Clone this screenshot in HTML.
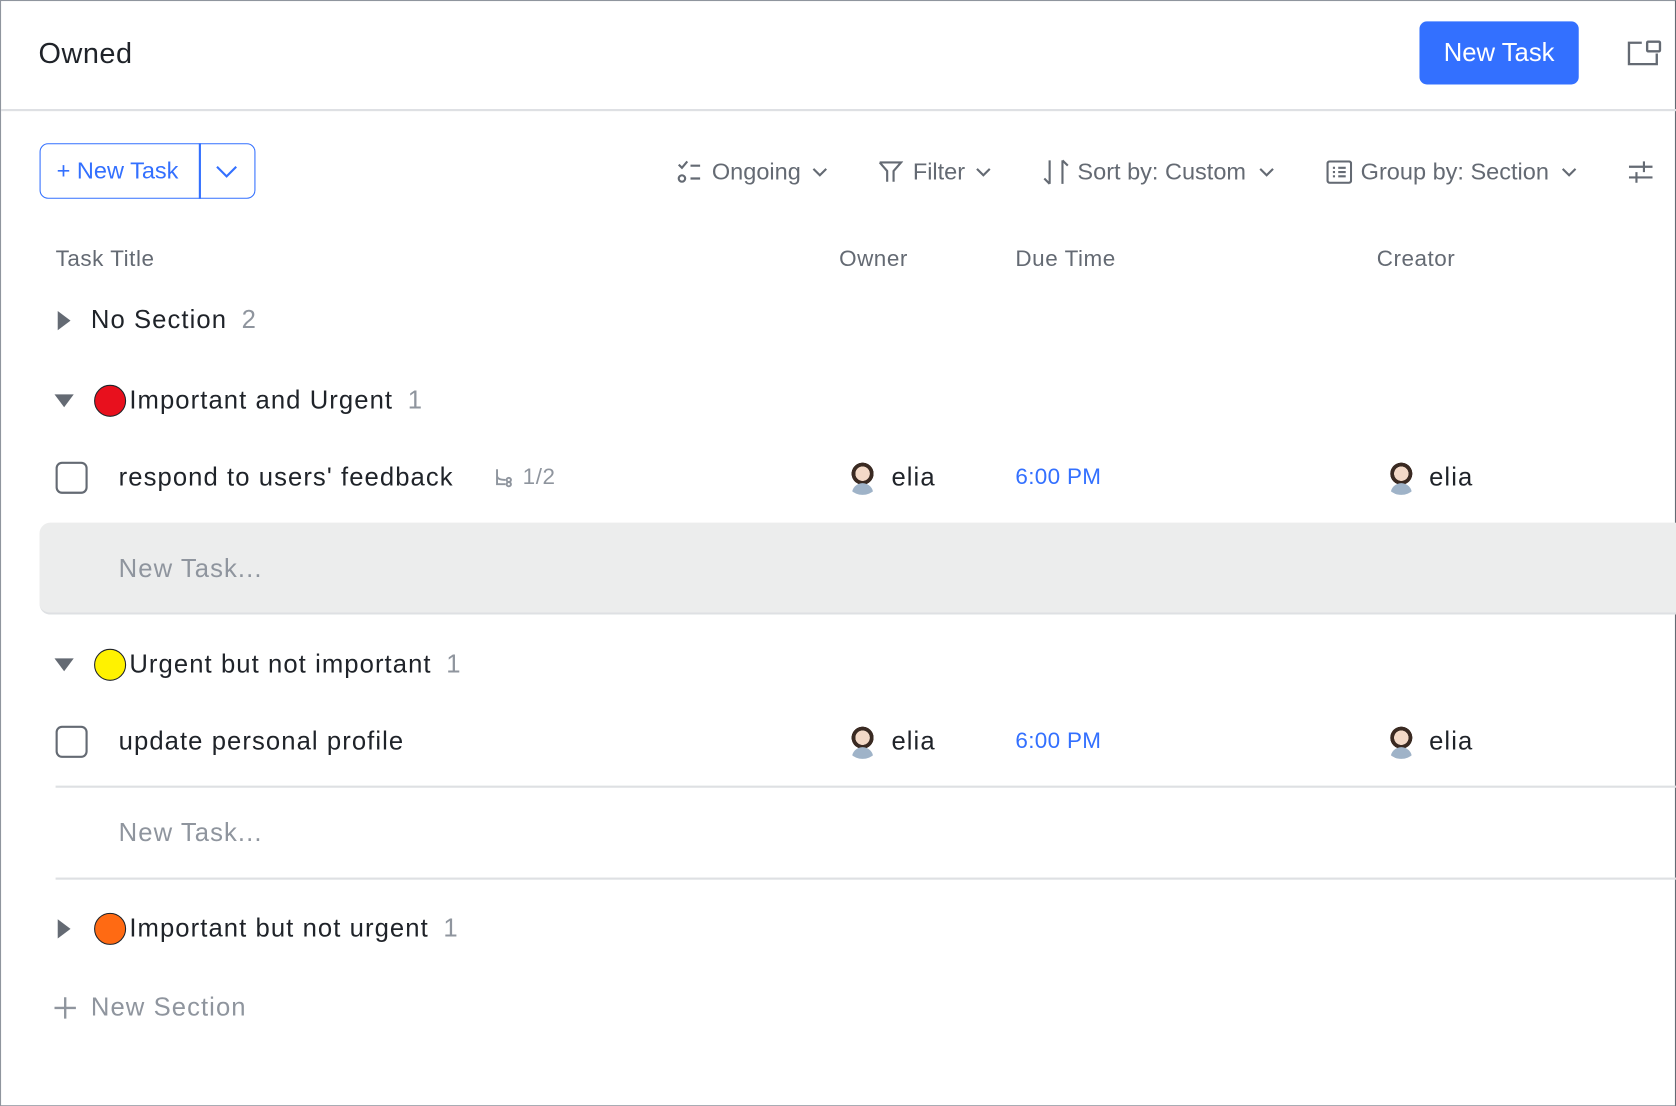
<!DOCTYPE html>
<html><head><meta charset="utf-8"><style>
*{box-sizing:border-box;margin:0;padding:0}
html,body{width:1676px;height:1106px;overflow:hidden;background:#fff}
#w{position:absolute;left:0;top:0;width:1568px;height:1035px;transform:scale(1.06888);transform-origin:0 0;font-family:"Liberation Sans",sans-serif;color:#1f2329;border:1px solid #8f959e;border-right:1px solid #646a73}
.a{position:absolute;white-space:nowrap}
.t{font-size:24px;line-height:30px;letter-spacing:1px}
.g{color:#8f959e}
.h{font-size:21px;color:#646a73;line-height:26px;letter-spacing:0.5px}
.tb{font-size:22px;color:#646a73;line-height:28px}
.cb{position:absolute;width:30px;height:30px;border:2px solid #646a73;border-radius:6px}
.dot{position:absolute;width:30px;height:30px;border-radius:50%;border:1.5px solid #1f2329}
.av{position:absolute;width:32px;height:32px;border-radius:50%;background:radial-gradient(circle at 50% 38%,#f3d9c7 0 26%,#3a2a22 27% 40%,#fff 41%);overflow:hidden}
.av:after{content:"";position:absolute;left:6px;top:21px;width:20px;height:14px;border-radius:10px 10px 0 0;background:#9fb3c8}
</style></head><body><div id="w">
<div class="a" style="left:35px;top:33px;font-size:27px;line-height:32px;letter-spacing:0.5px">Owned</div>
<div class="a" style="left:1327px;top:19px;width:149px;height:59px;background:#3370ff;border-radius:7px;color:#fff;font-size:24px;line-height:59px;text-align:center">New Task</div>
<svg class="a" style="left:1521px;top:36px" width="34" height="26" viewBox="0 0 34 26" fill="none" stroke="#646a73" stroke-width="2.2"><path d="M14 3H2v20h26v-10"/><rect x="19" y="2" width="12" height="9" rx="1"/></svg>
<div class="a" style="left:0;top:101px;width:1568px;height:2px;background:#dee0e3"></div>

<div class="a" style="left:36px;top:133px;width:202px;height:52px;border:1.5px solid #3370ff;border-radius:8px"></div>
<div class="a" style="left:185px;top:133px;width:1.5px;height:52px;background:#3370ff"></div>
<div class="a" style="left:52px;top:145px;font-size:22px;line-height:28px;color:#3370ff">+ New Task</div>
<svg class="a" style="left:200px;top:152px" width="22" height="14" fill="none" stroke="#3370ff" stroke-width="2"><path d="M2 3l9 9 9-9"/></svg>

<svg class="a" style="left:632px;top:148px" width="24" height="24" fill="none" stroke="#646a73" stroke-width="2"><path d="M2 5l3 3 5-6M13 6h9M13 18h9"/><circle cx="5" cy="18" r="3"/></svg>
<div class="a tb" style="left:665px;top:146px">Ongoing</div>
<svg class="a" style="left:758px;top:155px" width="16" height="10" fill="none" stroke="#646a73" stroke-width="2"><path d="M2 2l6 6 6-6"/></svg>
<svg class="a" style="left:820px;top:148px" width="24" height="24" fill="none" stroke="#646a73" stroke-width="2"><path d="M2 3h20l-7 8v10M9 21V11L2 3"/></svg>
<div class="a tb" style="left:853px;top:146px">Filter</div>
<svg class="a" style="left:911px;top:155px" width="16" height="10" fill="none" stroke="#646a73" stroke-width="2"><path d="M2 2l6 6 6-6"/></svg>
<svg class="a" style="left:974px;top:147px" width="26" height="26" fill="none" stroke="#646a73" stroke-width="2"><path d="M7 2v22M2 19l5 5M19 24V2M24 7l-5-5"/></svg>
<div class="a tb" style="left:1007px;top:146px">Sort by: Custom</div>
<svg class="a" style="left:1176px;top:155px" width="16" height="10" fill="none" stroke="#646a73" stroke-width="2"><path d="M2 2l6 6 6-6"/></svg>
<svg class="a" style="left:1240px;top:149px" width="24" height="22" fill="none" stroke="#646a73" stroke-width="2"><rect x="1" y="1" width="22" height="20" rx="2"/><path d="M6 7h2M11 7h7M6 11h2M11 11h7M6 15h2M11 15h7"/></svg>
<div class="a tb" style="left:1272px;top:146px">Group by: Section</div>
<svg class="a" style="left:1459px;top:155px" width="16" height="10" fill="none" stroke="#646a73" stroke-width="2"><path d="M2 2l6 6 6-6"/></svg>
<svg class="a" style="left:1521px;top:147px" width="26" height="26" fill="none" stroke="#646a73" stroke-width="2"><path d="M2 8h22M2 18h22M16 3v10M9 13v10"/></svg>

<div class="a h" style="left:51px;top:229px">Task Title</div>
<div class="a h" style="left:784px;top:229px">Owner</div>
<div class="a h" style="left:949px;top:229px">Due Time</div>
<div class="a h" style="left:1287px;top:229px">Creator</div>

<svg class="a" style="left:52px;top:289px" width="14" height="20"><path d="M1 1l12 9-12 9z" fill="#646a73"/></svg>
<div class="a t" style="left:84px;top:284px">No Section <span class="g" style="margin-left:6px">2</span></div>

<svg class="a" style="left:49px;top:367px" width="20" height="14"><path d="M1 1h18l-9 12z" fill="#646a73"/></svg>
<div class="dot" style="left:87px;top:359px;background:#e8101d"></div>
<div class="a t" style="left:120px;top:359px">Important and Urgent <span class="g" style="margin-left:6px">1</span></div>

<div class="cb" style="left:51px;top:431px"></div>
<div class="a t" style="left:110px;top:431px">respond to users' feedback</div>
<svg class="a" style="left:461px;top:436px" width="18" height="20" fill="none" stroke="#8f959e" stroke-width="1.8"><path d="M3 2v14h8M3 8c0 3 3 4 8 4"/><circle cx="14" cy="12" r="2"/><circle cx="14" cy="16" r="2"/></svg>
<div class="a" style="left:488px;top:433px;font-size:21px;line-height:26px;color:#8f959e;letter-spacing:0.5px">1/2</div>
<div class="av" style="left:790px;top:430px"></div>
<div class="a t" style="left:833px;top:431px">elia</div>
<div class="a" style="left:949px;top:433px;font-size:21px;line-height:26px;color:#3370ff;letter-spacing:0.3px">6:00 PM</div>
<div class="av" style="left:1294px;top:430px"></div>
<div class="a t" style="left:1336px;top:431px">elia</div>

<div class="a" style="left:36px;top:488px;width:1540px;height:86px;background:#eceded;border-radius:10px;border-bottom:2px solid #dee0e3"></div>
<div class="a t g" style="left:110px;top:517px">New Task...</div>

<svg class="a" style="left:49px;top:614px" width="20" height="14"><path d="M1 1h18l-9 12z" fill="#646a73"/></svg>
<div class="dot" style="left:87px;top:606px;background:#fff200"></div>
<div class="a t" style="left:120px;top:606px">Urgent but not important <span class="g" style="margin-left:6px">1</span></div>

<div class="cb" style="left:51px;top:678px"></div>
<div class="a t" style="left:110px;top:678px">update personal profile</div>
<div class="av" style="left:790px;top:677px"></div>
<div class="a t" style="left:833px;top:678px">elia</div>
<div class="a" style="left:949px;top:680px;font-size:21px;line-height:26px;color:#3370ff;letter-spacing:0.3px">6:00 PM</div>
<div class="av" style="left:1294px;top:677px"></div>
<div class="a t" style="left:1336px;top:678px">elia</div>

<div class="a" style="left:51px;top:734px;width:1520px;height:1.5px;background:#dee0e3"></div>
<div class="a t g" style="left:110px;top:764px">New Task...</div>
<div class="a" style="left:51px;top:820px;width:1520px;height:1.5px;background:#dee0e3"></div>

<svg class="a" style="left:52px;top:858px" width="14" height="20"><path d="M1 1l12 9-12 9z" fill="#646a73"/></svg>
<div class="dot" style="left:87px;top:853px;background:#ff6a13"></div>
<div class="a t" style="left:120px;top:853px">Important but not urgent <span class="g" style="margin-left:6px">1</span></div>

<svg class="a" style="left:49px;top:931px" width="22" height="22" fill="none" stroke="#8f959e" stroke-width="2.2"><path d="M11 1v20M1 11h20"/></svg>
<div class="a t g" style="left:84px;top:927px">New Section</div>
</div></body></html>
